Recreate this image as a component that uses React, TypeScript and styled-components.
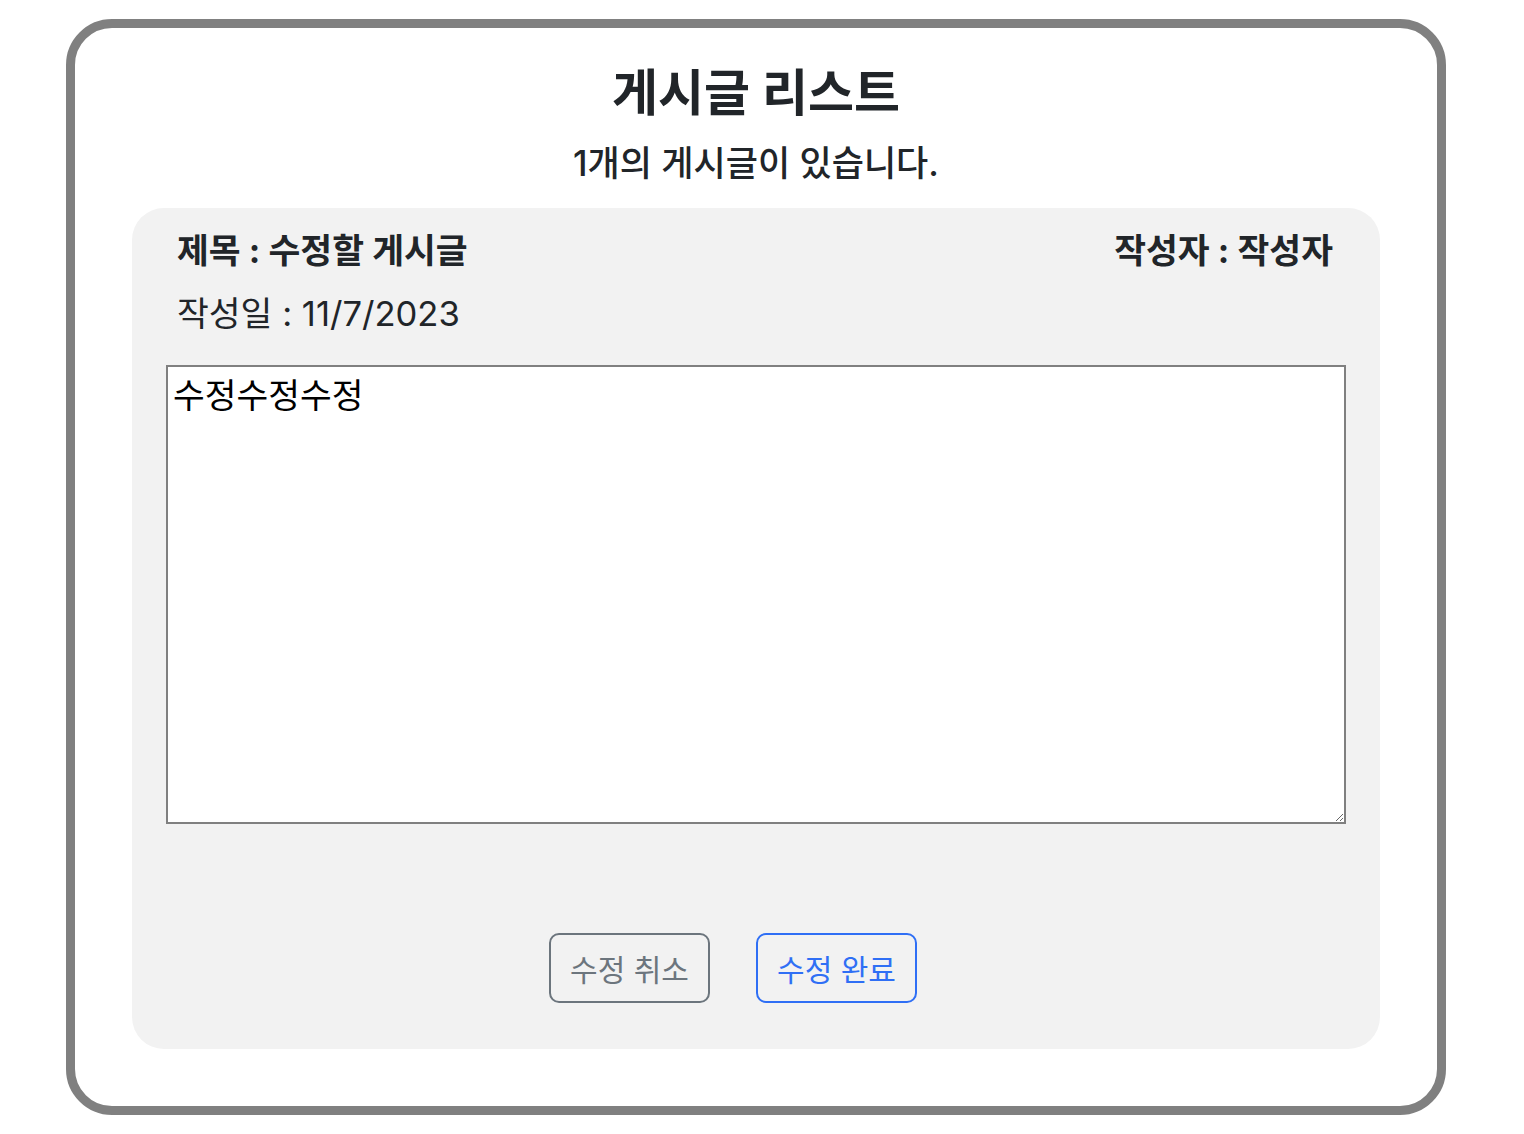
import styled, { createGlobalStyle } from 'styled-components';

const GlobalStyle = createGlobalStyle`
  body {
    margin: 0;
    background: #fff;
    font-family: Inter, "Noto Sans CJK KR", sans-serif;
    color: #212529;
  }
`;

const Frame = styled.div`
  box-sizing: border-box;
  width: 1380px;
  height: 1096px;
  margin: 19px 0 0 66px;
  border: 9px solid #808080;
  border-radius: 46px;
  background: #fff;
  padding: 0 57px 57px;
  display: flex;
  flex-direction: column;
`;

const Heading = styled.header`
  display: flex;
  flex-direction: column;
  align-items: center;
  height: 180px;
`;

const Title = styled.h2`
  margin: 35px 0 0;
  font-size: 50px;
  font-weight: 700;
  line-height: 1.2;
`;

const Subtitle = styled.p`
  margin: 19px 0 0;
  font-size: 35px;
  font-weight: 500;
  line-height: 1.2;
`;

const Card = styled.section`
  flex: 1;
  background: #f2f2f2;
  border-radius: 32px;
  padding: 11px 34px 46px;
  display: flex;
  flex-direction: column;
`;

const MetaRow = styled.div`
  display: flex;
  justify-content: space-between;
  padding: 0 13px 0 11px;
`;

const MetaText = styled.div<{ $bold?: boolean }>`
  font-size: 34.6px;
  font-weight: ${(p) => (p.$bold ? 700 : 400)};
  line-height: 1.82;
`;

const Editor = styled.textarea`
  box-sizing: border-box;
  display: block;
  width: 100%;
  height: 459px;
  margin-top: 20px;
  border: 2px solid #808080;
  background: #fff;
  padding: 7px 5px 4px;
  font-family: Inter, "Noto Sans CJK KR", sans-serif;
  font-size: 34.5px;
  line-height: 1.3;
  color: #000;
  outline: none;
  resize: vertical;
`;

const Actions = styled.div`
  margin-top: auto;
  display: flex;
  justify-content: center;
`;

const Button = styled.button<{ $tone: 'gray' | 'blue' }>`
  box-sizing: border-box;
  width: 161px;
  height: 70px;
  margin: 0 46px 0 0;
  border: 2px solid ${(p) => (p.$tone === 'blue' ? '#2f6ff5' : '#6c757d')};
  color: ${(p) => (p.$tone === 'blue' ? '#2f6ff5' : '#6c757d')};
  background: transparent;
  border-radius: 10px;
  font-family: Inter, "Noto Sans CJK KR", sans-serif;
  font-size: 30px;
  font-weight: 400;
  cursor: pointer;
`;

export default function App() {
  return (
    <>
      <GlobalStyle />
      <Frame>
        <Heading>
          <Title>게시글 리스트</Title>
          <Subtitle>1개의 게시글이 있습니다.</Subtitle>
        </Heading>
        <Card>
          <MetaRow>
            <MetaText $bold>제목 : 수정할 게시글</MetaText>
            <MetaText $bold>작성자 : 작성자</MetaText>
          </MetaRow>
          <MetaRow>
            <MetaText>작성일 : 11/7/2023</MetaText>
          </MetaRow>
          <Editor defaultValue="수정수정수정" />
          <Actions>
            <Button $tone="gray">수정 취소</Button>
            <Button $tone="blue">수정 완료</Button>
          </Actions>
        </Card>
      </Frame>
    </>
  );
}
